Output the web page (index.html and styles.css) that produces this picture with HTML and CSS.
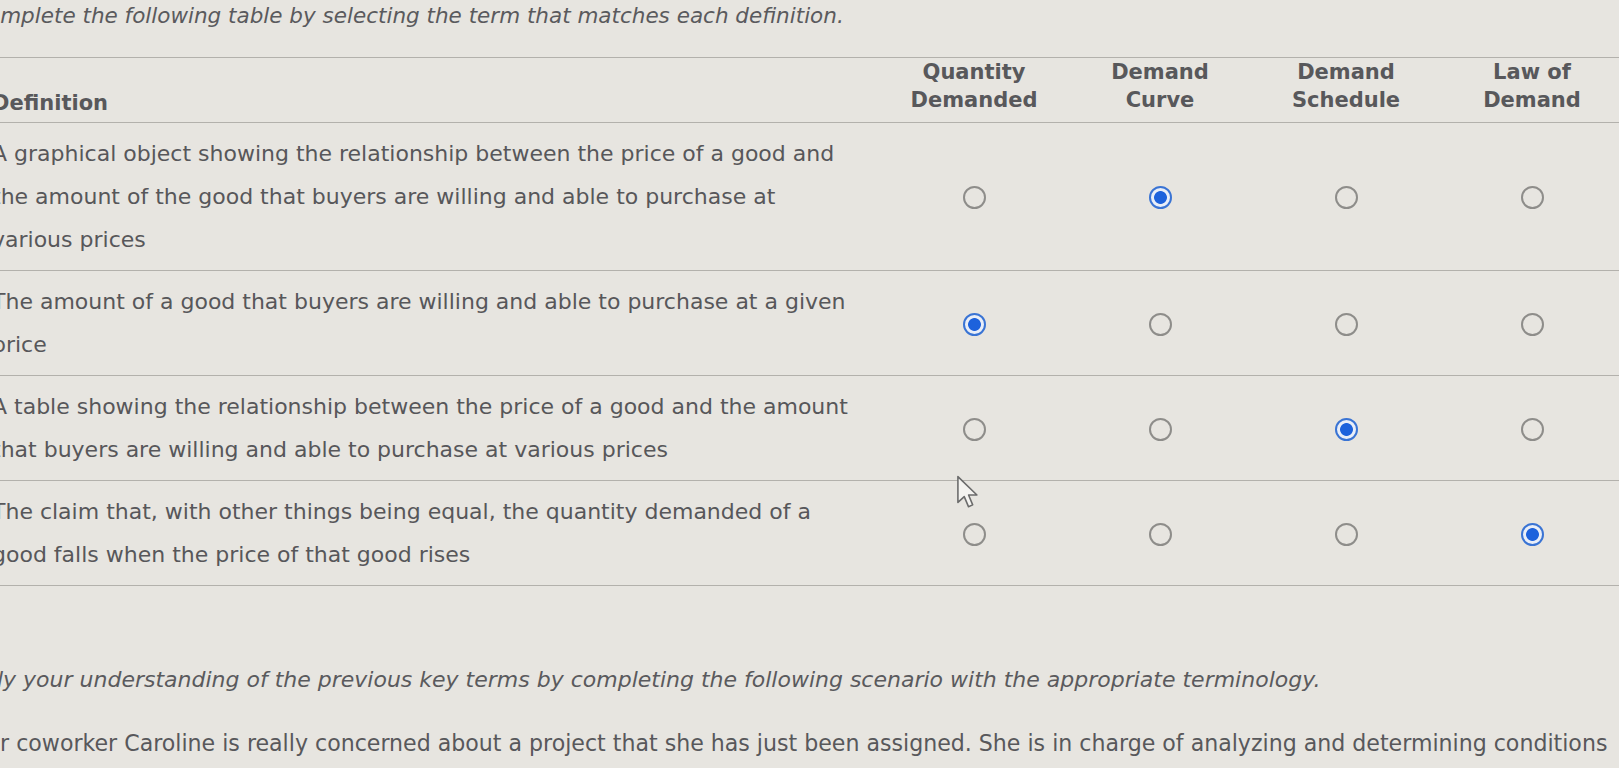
FILE: index.html
```html
<!DOCTYPE html>
<html lang="en">
<head>
<meta charset="utf-8">
<title>Demand terms</title>
<link rel="stylesheet" href="styles.css">
</head>
<body>
<main class="page">
  <p class="intro">Complete the following table by selecting the term that matches each definition.</p>
  <table class="terms">
    <thead>
      <tr>
        <th class="def">Definition</th>
        <th class="opt">Quantity<br>Demanded</th>
        <th class="opt">Demand<br>Curve</th>
        <th class="opt">Demand<br>Schedule</th>
        <th class="opt">Law of<br>Demand</th>
      </tr>
    </thead>
    <tbody>
      <tr>
        <td class="def">A graphical object showing the relationship between the price of a good and the amount of the good that buyers are willing and able to purchase at various prices</td>
        <td class="opt"><span class="radio"></span></td>
        <td class="opt"><span class="radio on"></span></td>
        <td class="opt"><span class="radio"></span></td>
        <td class="opt"><span class="radio"></span></td>
      </tr>
      <tr>
        <td class="def">The amount of a good that buyers are willing and able to purchase at a given price</td>
        <td class="opt"><span class="radio on"></span></td>
        <td class="opt"><span class="radio"></span></td>
        <td class="opt"><span class="radio"></span></td>
        <td class="opt"><span class="radio"></span></td>
      </tr>
      <tr>
        <td class="def">A table showing the relationship between the price of a good and the amount that buyers are willing and able to purchase at various prices</td>
        <td class="opt"><span class="radio"></span></td>
        <td class="opt"><span class="radio"></span></td>
        <td class="opt"><span class="radio on"></span></td>
        <td class="opt"><span class="radio"></span></td>
      </tr>
      <tr>
        <td class="def">The claim that, with other things being equal, the quantity demanded of a good falls when the price of that good rises</td>
        <td class="opt"><span class="radio"></span></td>
        <td class="opt"><span class="radio"></span></td>
        <td class="opt"><span class="radio"></span></td>
        <td class="opt"><span class="radio on"></span></td>
      </tr>
    </tbody>
  </table>
  <p class="apply">Apply your understanding of the previous key terms by completing the following scenario with the appropriate terminology.</p>
  <p class="scenario">Your coworker Caroline is really concerned about a project that she has just been assigned. She is in charge of analyzing and determining conditions</p>
  <svg class="cursor" width="26" height="38" viewBox="0 0 24 36" aria-hidden="true">
    <path d="M1.5 1.5 L1.5 26 L7.5 20.5 L11.5 30 L15.5 28.3 L11.6 19 L19.5 19 Z" fill="#f4f3f0" stroke="#6b6b6b" stroke-width="1.5" stroke-linejoin="round"/>
  </svg>
</main>
</body>
</html>
```

FILE: styles.css
```css
html, body {
  margin: 0;
  padding: 0;
}

body {
  width: 1619px;
  height: 768px;
  overflow: hidden;
  background: #e7e5e0;
  color: #57575a;
  font-family: "DejaVu Sans", Verdana, sans-serif;
}

.page {
  position: relative;
  height: 768px;
}

.intro {
  margin: 3px 0 0 -28px;
  font-size: 21.5px;
  line-height: 26px;
  font-style: italic;
  color: #5a5a5d;
  white-space: nowrap;
}

.terms {
  margin: 28px 0 0 -8px;
  border-collapse: collapse;
  table-layout: fixed;
  width: 1633px;
  font-size: 22px;
}

.terms th,
.terms td {
  padding: 0;
  border-bottom: 1px solid #b3b1ac;
}

.terms thead tr {
  border-top: 1px solid #b3b1ac;
}

.terms th {
  height: 54px;
  vertical-align: bottom;
  padding-bottom: 8px;
  font-size: 21px;
  font-weight: bold;
  line-height: 28px;
  color: #58585b;
}

.terms th.def {
  width: 889px;
  text-align: left;
  padding-bottom: 5px;
}

.terms th.opt {
  width: 186px;
  text-align: center;
}

.terms td.def {
  padding: 9px 30px 9px 0;
  line-height: 43px;
  vertical-align: top;
}

.terms td.opt {
  text-align: center;
  vertical-align: middle;
}

.radio {
  display: inline-block;
  box-sizing: border-box;
  width: 23px;
  height: 23px;
  border-radius: 50%;
  border: 2px solid #8e8d8a;
  vertical-align: middle;
}

.radio.on {
  border-color: #3a74d4;
  background: radial-gradient(circle, #1d62dc 0 6px, #e9eef8 6.8px);
}

.apply {
  margin: 81px 0 0 -46px;
  font-size: 22px;
  line-height: 26px;
  font-style: italic;
  color: #5a5a5d;
  white-space: nowrap;
}

.scenario {
  margin: 37px 0 0 -38px;
  font-size: 22.1px;
  line-height: 26px;
  color: #58585b;
  white-space: nowrap;
}

.cursor {
  position: absolute;
  left: 956px;
  top: 472px;
}
```
